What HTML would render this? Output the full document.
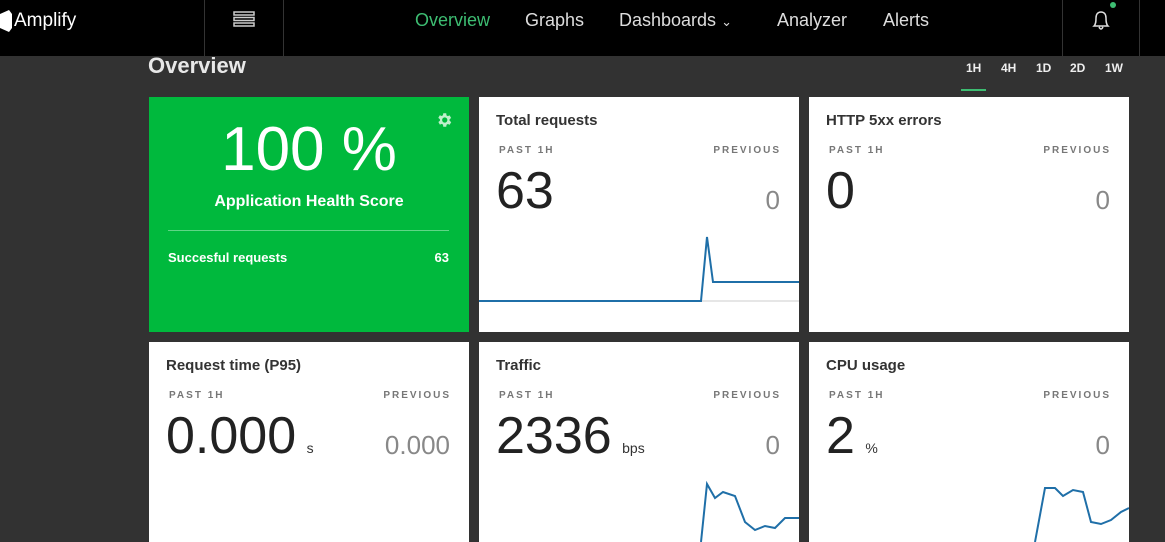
<!DOCTYPE html><html><head><style>
*{margin:0;padding:0;box-sizing:border-box}
body{width:1165px;height:539px;overflow:hidden;background:#323232;font-family:"Liberation Sans",sans-serif;position:relative}
.a{position:absolute}
.hdr{left:0;top:0;width:1165px;height:56px;background:#000}
.nav{top:10px;font-size:18px;color:#ddd}
.card{background:#fff;width:320px}
.t{left:17px;top:15px;font-size:15px;font-weight:bold;color:#333}
.lab{font-size:10px;letter-spacing:2px;color:#777;font-weight:bold}
.big{font-size:52px;color:#222;left:17px;top:64px}
.prev{font-size:26px;color:#888;right:19px;top:88px}
.u{font-size:14px;color:#333;margin-left:-4px}
.tab{top:61px;font-size:12px;font-weight:bold;color:#eee}
</style></head><body>
<div class="a hdr"></div>
<svg class="a" style="left:0;top:10px" width="12" height="22"><path d="M0 4L9 0L12 4V18L9 22L0 18Z" fill="#fff"/></svg>
<div class="a" style="left:14px;top:10px;font-size:19px;color:#fff">Amplify</div>
<div class="a" style="left:204px;top:0;width:1px;height:56px;background:#333"></div>
<div class="a" style="left:283px;top:0;width:1px;height:56px;background:#333"></div>
<div class="a" style="left:1062px;top:0;width:1px;height:56px;background:#333"></div>
<div class="a" style="left:1139px;top:0;width:1px;height:56px;background:#333"></div>
<svg class="a" style="left:233px;top:11px" width="22" height="16"><g fill="none" stroke="#ccc" stroke-width="1.5"><rect x="1" y="1" width="20" height="3"/><rect x="1" y="6.5" width="20" height="3"/><rect x="1" y="12" width="20" height="3"/></g></svg>
<div class="a nav" style="left:415px;color:#3dbd72">Overview</div>
<div class="a nav" style="left:525px">Graphs</div>
<div class="a nav" style="left:619px">Dashboards <span style="font-size:13px">&#8964;</span></div>
<div class="a nav" style="left:777px">Analyzer</div>
<div class="a nav" style="left:883px">Alerts</div>
<svg class="a" style="left:1090px;top:8px" width="22" height="24"><path d="M4 18C6 16 6 13 6 10C6 6 8 4 11 4C14 4 16 6 16 10C16 13 16 16 18 18Z M9 19Q11 23 13 19" fill="none" stroke="#ddd" stroke-width="1.5"/></svg>
<div class="a" style="left:1110px;top:2px;width:6px;height:6px;border-radius:3px;background:#3dbd72"></div>
<div class="a" style="left:148px;top:53px;font-size:22px;font-weight:bold;color:#e8e8e8">Overview</div>
<div class="a tab" style="left:966px">1H</div>
<div class="a tab" style="left:1001px">4H</div>
<div class="a tab" style="left:1036px">1D</div>
<div class="a tab" style="left:1070px">2D</div>
<div class="a tab" style="left:1105px">1W</div>
<div class="a" style="left:961px;top:89px;width:25px;height:2px;background:#3dbd72"></div>

<div class="a" style="left:149px;top:97px;width:320px;height:235px;background:#00b93d;color:#fff">
<svg class="a" style="left:286px;top:14px" width="18" height="18" viewBox="0 0 24 24"><path fill="#bff0cc" d="M19.4 13a7.5 7.5 0 000-2l2.1-1.6-2-3.5-2.5 1a7 7 0 00-1.7-1L15 3h-4l-.4 2.7a7 7 0 00-1.7 1l-2.5-1-2 3.5L6.6 11a7.5 7.5 0 000 2l-2.1 1.6 2 3.5 2.5-1a7 7 0 001.7 1L11 21h4l.4-2.7a7 7 0 001.7-1l2.5 1 2-3.5zM13 15.5a3.5 3.5 0 110-7 3.5 3.5 0 010 7z"/></svg>
<div class="a" style="left:0;width:320px;top:17px;text-align:center;font-size:62px">100 %</div>
<div class="a" style="left:0;width:320px;top:96px;text-align:center;font-size:16px;font-weight:bold">Application Health Score</div>
<div class="a" style="left:19px;top:133px;width:281px;height:1px;background:#5fd686"></div>
<div class="a" style="left:19px;top:153px;font-size:13px;font-weight:bold">Succesful requests</div>
<div class="a" style="right:20px;top:153px;font-size:13px;font-weight:bold">63</div>
</div>

<div class="a card" style="left:479px;top:97px;height:235px">
<div class="a t">Total requests</div><div class="a lab" style="left:20px;top:48px">PAST 1H</div><div class="a lab" style="right:18px;top:48px">PREVIOUS</div>
<div class="a big">63</div><div class="a prev">0</div>
<svg class="a" style="left:0;top:130px" width="320" height="80"><line x1="0" y1="74" x2="320" y2="74" stroke="#ccc"/><path d="M0 74H222L228 10L234 55H320" fill="none" stroke="#1f6fa8" stroke-width="2"/></svg>
</div>
<div class="a card" style="left:809px;top:97px;height:235px">
<div class="a t">HTTP 5xx errors</div><div class="a lab" style="left:20px;top:48px">PAST 1H</div><div class="a lab" style="right:18px;top:48px">PREVIOUS</div>
<div class="a big">0</div><div class="a prev">0</div>
</div>

<div class="a card" style="left:149px;top:342px;height:200px">
<div class="a t">Request time (P95)</div><div class="a lab" style="left:20px;top:48px">PAST 1H</div><div class="a lab" style="right:18px;top:48px">PREVIOUS</div>
<div class="a big">0.000 <span class="u">s</span></div><div class="a prev">0.000</div>
</div>
<div class="a card" style="left:479px;top:342px;height:200px">
<div class="a t">Traffic</div><div class="a lab" style="left:20px;top:48px">PAST 1H</div><div class="a lab" style="right:18px;top:48px">PREVIOUS</div>
<div class="a big">2336 <span class="u">bps</span></div><div class="a prev">0</div>
<svg class="a" style="left:0;top:130px" width="320" height="70"><path d="M222 70L228 12L236 26L244 20L256 24L266 50L276 58L286 54L296 56L306 46L320 46" fill="none" stroke="#1f6fa8" stroke-width="2"/></svg>
</div>
<div class="a card" style="left:809px;top:342px;height:200px">
<div class="a t">CPU usage</div><div class="a lab" style="left:20px;top:48px">PAST 1H</div><div class="a lab" style="right:18px;top:48px">PREVIOUS</div>
<div class="a big">2 <span class="u">%</span></div><div class="a prev">0</div>
<svg class="a" style="left:0;top:130px" width="320" height="70"><path d="M226 70L236 16L246 16L254 24L264 18L274 20L282 50L292 52L302 48L312 40L320 36" fill="none" stroke="#1f6fa8" stroke-width="2"/></svg>
</div>
</body></html>
